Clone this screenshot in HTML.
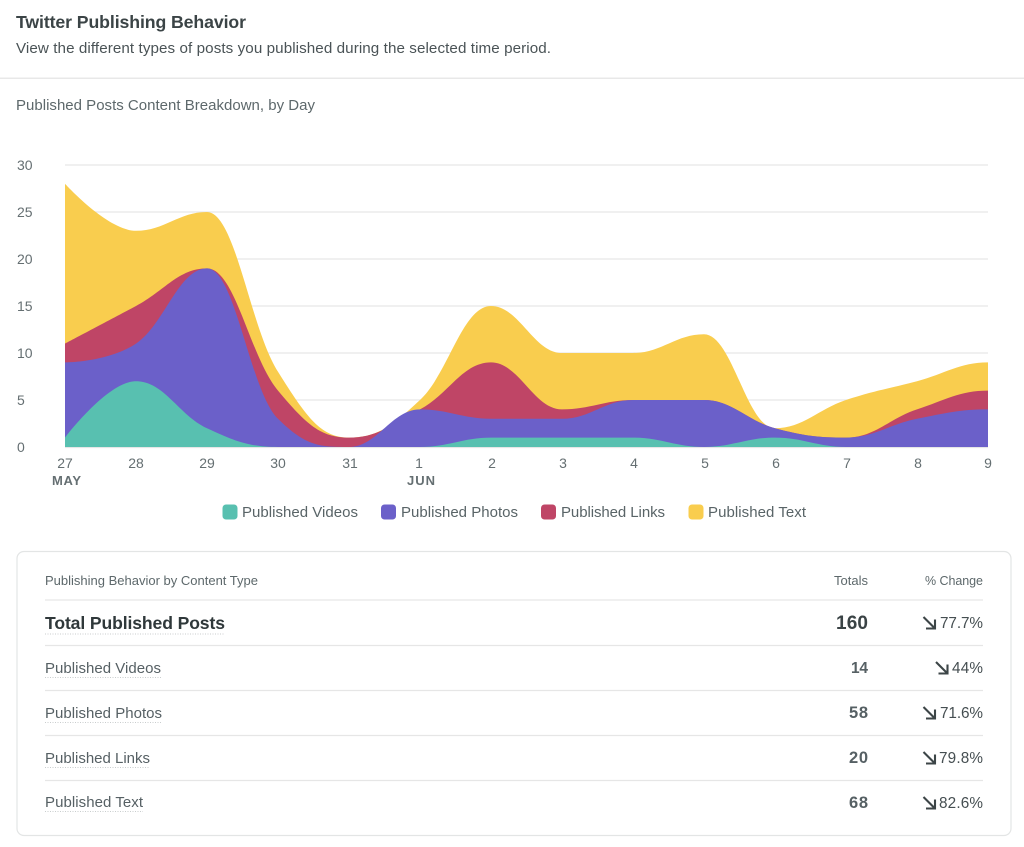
<!DOCTYPE html>
<html lang="en">
<head>
<meta charset="utf-8">
<title>Twitter Publishing Behavior</title>
<style>
html,body{margin:0;padding:0;background:#fff;width:1024px;height:847px;overflow:hidden}
svg{display:block}
text{font-family:"Liberation Sans",Arial,sans-serif}
.sub{font-size:15.2px;fill:#4a5356}
.ax{font-size:14px;fill:#656f72}
.mo{font-size:13px;font-weight:700;fill:#656f72}
.lg{font-size:15px;fill:#596467}
.th{font-size:13px;fill:#5d686b}
.row{font-size:15px;fill:#566064}
.num{font-size:16.5px;font-weight:700;fill:#566064}
.pct{font-size:15.3px;fill:#454e51}
.arr{fill:none;stroke:#3c4547;stroke-width:2.1}
.dot{stroke:#c9cdce;stroke-width:1;stroke-dasharray:1 1.5}
.ln{stroke:#e6e6e6;stroke-width:1.2}
</style>
</head>
<body>
<svg width="1024" height="847" viewBox="0 0 1024 847" xmlns="http://www.w3.org/2000/svg">
<text x="16" y="28" textLength="230" font-size="17.7" font-weight="700" fill="#3b4446">Twitter Publishing Behavior</text>
<text x="16" y="53" textLength="535" class="sub">View the different types of posts you published during the selected time period.</text>
<rect x="0" y="77.5" width="1024" height="1.5" fill="#e8e8e8"/>
<text x="16" y="110" textLength="299" font-size="15" fill="#5d686b">Published Posts Content Breakdown, by Day</text>

<g class="ln">
<line x1="65" x2="988" y1="165" y2="165"/>
<line x1="65" x2="988" y1="212" y2="212"/>
<line x1="65" x2="988" y1="259" y2="259"/>
<line x1="65" x2="988" y1="306" y2="306"/>
<line x1="65" x2="988" y1="353" y2="353"/>
<line x1="65" x2="988" y1="400" y2="400"/>
<line x1="65" x2="988" y1="447.5" y2="447.5"/>
</g>

<g transform="translate(65,447) scale(71,-9.4)">
<path fill="#f9cd4e" d="M0,0L0,28C0,28 .6,23 1,23C1.4,23 1.6,25 2,25C2.4,25 2.6,12.8 3,8C3.4,3.2 3.6,1 4,1C4.4,1 4.6,2.2 5,5C5.4,7.8 5.6,15 6,15C6.4,15 6.6,10 7,10C7.4,10 7.6,10 8,10C8.4,10 8.6,12 9,12C9.4,12 9.6,2 10,2C10.4,2 10.6,4 11,5C11.4,6 11.6,6.2 12,7C12.4,7.8 12.6,9 13,9L13,0Z"/>
<path fill="#bf4566" d="M0,0L0,11C0,11 .6,13.4 1,15C1.4,16.6 1.6,19 2,19C2.4,19 2.6,9.6 3,6C3.4,2.4 3.6,1 4,1C4.4,1 4.6,2.4 5,4C5.4,5.6 5.6,9 6,9C6.4,9 6.6,4 7,4C7.4,4 7.6,5 8,5C8.4,5 8.6,5 9,5C9.4,5 9.6,2.8 10,2C10.4,1.2 10.6,1 11,1C11.4,1 11.6,3 12,4C12.4,5 12.6,6 13,6L13,0Z"/>
<path fill="#6b60c9" d="M0,0L0,9C0,9 .6,9 1,11C1.4,13 1.6,19 2,19C2.4,19 2.6,6 3,3C3.4,0 3.6,0 4,0C4.4,0 4.6,4 5,4C5.4,4 5.6,3 6,3C6.4,3 6.6,3 7,3C7.4,3 7.6,5 8,5C8.4,5 8.6,5 9,5C9.4,5 9.6,2.8 10,2C10.4,1.2 10.6,1 11,1C11.4,1 11.6,2.4 12,3C12.4,3.6 12.6,4 13,4L13,0Z"/>
<path fill="#58c0b0" d="M0,0L0,1C0,1 .6,7 1,7C1.4,7 1.6,3.4 2,2C2.4,.6 2.6,0 3,0L5,0C5.4,0 5.6,1 6,1L8,1C8.4,1 8.6,0 9,0C9.4,0 9.6,1 10,1C10.4,1 10.6,0 11,0L13,0Z"/>
</g>

<g class="ax">
<text x="17" y="170">30</text>
<text x="17" y="217">25</text>
<text x="17" y="264">20</text>
<text x="17" y="311">15</text>
<text x="17" y="358">10</text>
<text x="17" y="405">5</text>
<text x="17" y="452">0</text>
</g>
<g class="ax" text-anchor="middle">
<text x="65" y="468">27</text>
<text x="136" y="468">28</text>
<text x="207" y="468">29</text>
<text x="278" y="468">30</text>
<text x="350" y="468">31</text>
<text x="419" y="468">1</text>
<text x="492" y="468">2</text>
<text x="563" y="468">3</text>
<text x="634" y="468">4</text>
<text x="705" y="468">5</text>
<text x="776" y="468">6</text>
<text x="847" y="468">7</text>
<text x="918" y="468">8</text>
<text x="988" y="468">9</text>
</g>
<text x="52" y="485" textLength="29" class="mo">MAY</text>
<text x="407" y="485" textLength="28" class="mo">JUN</text>

<rect x="222.5" y="504.5" width="15" height="15" rx="3.5" fill="#58c0b0"/>
<text x="242" y="517" textLength="116" class="lg">Published Videos</text>
<rect x="381" y="504.5" width="15" height="15" rx="3.5" fill="#6b60c9"/>
<text x="401" y="517" textLength="117" class="lg">Published Photos</text>
<rect x="541" y="504.5" width="15" height="15" rx="3.5" fill="#bf4566"/>
<text x="561" y="517" textLength="104" class="lg">Published Links</text>
<rect x="688.5" y="504.5" width="15" height="15" rx="3.5" fill="#f9cd4e"/>
<text x="708" y="517" textLength="98" class="lg">Published Text</text>

<rect x="17" y="551.5" width="994" height="284" rx="7" fill="#fff" stroke="#e3e5e5" stroke-width="1.2"/>
<text x="45" y="585" textLength="213" class="th">Publishing Behavior by Content Type</text>
<text x="834" y="585" textLength="34" class="th">Totals</text>
<text x="925" y="585" textLength="58" font-size="12.5" fill="#5d686b">% Change</text>

<g class="ln">
<line x1="45" x2="983" y1="600" y2="600"/>
<line x1="45" x2="983" y1="645.5" y2="645.5"/>
<line x1="45" x2="983" y1="690.5" y2="690.5"/>
<line x1="45" x2="983" y1="735.5" y2="735.5"/>
<line x1="45" x2="983" y1="780.5" y2="780.5"/>
</g>

<text x="45" y="629" textLength="180" font-size="17.6" font-weight="700" fill="#2f383a">Total Published Posts</text>
<line class="dot" x1="45" x2="225" y1="634" y2="634"/>
<text x="836" y="629" textLength="32" font-size="19" font-weight="700" fill="#3a4345">160</text>
<path class="arr" d="M923.5,617L935,628.5M935,619.5V628.5H926"/>
<text x="940" y="628" textLength="43" class="pct">77.7%</text>

<text x="45" y="673" textLength="116" class="row">Published Videos</text>
<line class="dot" x1="45" x2="161" y1="677.5" y2="677.5"/>
<text x="851" y="673" textLength="17" font-size="15.5" font-weight="700" fill="#566064">14</text>
<path class="arr" d="M936,662L947.5,673.5M947.5,664.5V673.5H938.5"/>
<text x="952" y="673" textLength="31" class="pct">44%</text>

<text x="45" y="718" textLength="117" class="row">Published Photos</text>
<line class="dot" x1="45" x2="162" y1="722.5" y2="722.5"/>
<text x="849" y="718" textLength="19" class="num">58</text>
<path class="arr" d="M923.5,707L935,718.5M935,709.5V718.5H926"/>
<text x="940" y="718" textLength="43" class="pct">71.6%</text>

<text x="45" y="763" textLength="105" class="row">Published Links</text>
<line class="dot" x1="45" x2="150" y1="767.5" y2="767.5"/>
<text x="849" y="763" textLength="19" class="num">20</text>
<path class="arr" d="M923.5,752L935,763.5M935,754.5V763.5H926"/>
<text x="939" y="763" textLength="44" class="pct">79.8%</text>

<text x="45" y="807" textLength="98" class="row">Published Text</text>
<line class="dot" x1="45" x2="143" y1="811.5" y2="811.5"/>
<text x="849" y="808" textLength="19" class="num">68</text>
<path class="arr" d="M923.5,797L935,808.5M935,799.5V808.5H926"/>
<text x="939" y="808" textLength="44" class="pct">82.6%</text>
</svg>
</body>
</html>
